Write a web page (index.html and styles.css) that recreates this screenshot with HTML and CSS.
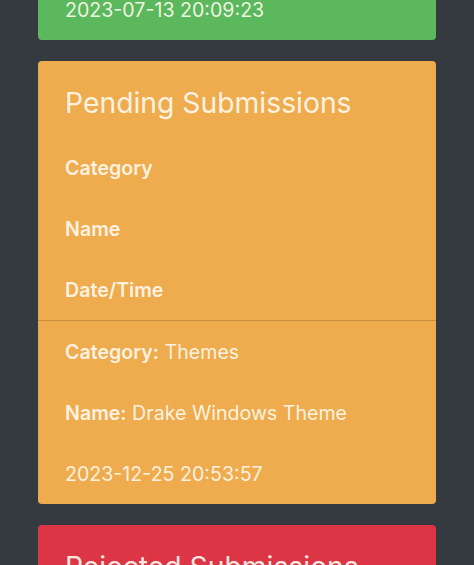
FILE: index.html
```html
<!DOCTYPE html>
<html lang="en">
<head>
  <meta charset="UTF-8">
  <meta name="viewport" content="width=device-width, initial-scale=1.0">
  <title>Submissions</title>
  <link rel="stylesheet" href="styles.css">
</head>
<body>
  <div class="submissions">
    <div class="card approved">
      <div class="row">2023-07-13 20:09:23</div>
    </div>

    <div class="card pending">
      <div class="card-head">
        <h2 class="card-title">Pending Submissions</h2>
        <div class="row label">Category</div>
        <div class="row label">Name</div>
        <div class="row label">Date/Time</div>
      </div>
      <div class="card-body">
        <div class="row"><b>Category:</b> Themes</div>
        <div class="row"><b>Name:</b> Drake Windows Theme</div>
        <div class="row">2023-12-25 20:53:57</div>
      </div>
    </div>

    <div class="card rejected">
      <div class="card-head">
        <h2 class="card-title">Rejected Submissions</h2>
      </div>
    </div>
  </div>
</body>
</html>
```

FILE: styles.css
```css
body {
  margin: 0;
  background-color: #343a40;
  font-family: Inter, "Noto Sans", sans-serif;
  overflow: hidden;
}

.submissions {
  padding: 0 38px;
}

.card {
  border-radius: 4px;
  margin-bottom: 21px;
  color: rgba(255, 250, 240, 0.92);
  overflow: hidden;
}

/* the approved list is scrolled mostly out of view */
.card.approved {
  margin-top: -21px;
  background-color: #5cb85c;
}

.card.pending {
  background-color: #eeac4e;
}

.card.rejected {
  background-color: #dc3545;
  height: 120px;
}

.card-title {
  margin: 0;
  padding: 9px 27px 0;
  font-size: 28.3px;
  font-weight: 400;
  line-height: 67px;
  height: 67px;
}

.card-head {
  border-bottom: 1px solid #c98f3e;
}

.rejected .card-head {
  border-bottom: none;
}

.row {
  padding: 1px 27px 0;
  font-size: 19.6px;
  line-height: 60px;
  height: 60px;
  white-space: nowrap;
}

.row.label,
.row b {
  font-weight: 600;
}
```
